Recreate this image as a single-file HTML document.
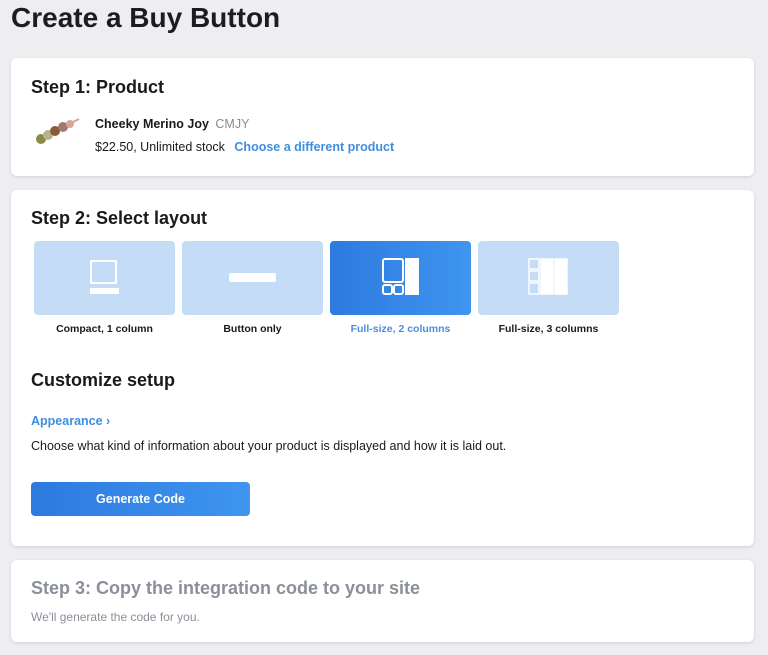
<!DOCTYPE html>
<html><head><style>
body{margin:0;width:768px;height:655px;background:#eeeef1;font-family:"Liberation Sans",sans-serif;color:#1a1a1a;position:relative;overflow:hidden}
.a{position:absolute}
h1{position:absolute;left:11px;top:2px;margin:0;font-size:28px;font-weight:bold;color:#1d1d1f}
.card{position:absolute;left:11px;width:743px;background:#fff;border-radius:6px;box-shadow:0 1px 3px rgba(0,0,0,.12)}
h2{position:absolute;margin:0;font-size:18px;font-weight:bold}
.tile{position:absolute;top:241px;width:141px;height:74px;border-radius:4px;background:#c5dcf7}
.lbl{position:absolute;top:323px;width:141px;text-align:center;font-size:10.5px;font-weight:bold}
</style></head><body>
<h1>Create a Buy Button</h1>
<div class="card" style="top:58px;height:118px"></div>
<h2 style="left:31px;top:77px">Step 1: Product</h2>
<svg class="a" style="left:33px;top:115px" width="48" height="32"><circle cx="8" cy="24" r="5" fill="#8c8a4a"/><circle cx="15" cy="20" r="5" fill="#b9b38a"/><circle cx="22" cy="16" r="5" fill="#8a5a3a"/><circle cx="30" cy="12" r="5" fill="#a07a6e"/><circle cx="37" cy="9" r="4" fill="#d8a498"/><line x1="40" y1="7" x2="46" y2="4" stroke="#d8a498" stroke-width="2"/></svg>
<div class="a" style="left:95px;top:117px;font-size:12.5px;font-weight:bold">Cheeky Merino Joy <span style="font-weight:normal;color:#8a8a94;margin-left:3px">CMJY</span></div>
<div class="a" style="left:95px;top:140px;font-size:12.5px">$22.50, Unlimited stock <span style="color:#3f8ee0;font-weight:bold;margin-left:6px">Choose a different product</span></div>

<div class="card" style="top:190px;height:356px"></div>
<h2 style="left:31px;top:208px">Step 2: Select layout</h2>
<div class="tile" style="left:34px"><div class="a" style="left:56px;top:19px;width:27px;height:24px;border:2px solid #fff;box-sizing:border-box"></div><div class="a" style="left:56px;top:47px;width:29px;height:6px;background:#fff"></div></div>
<div class="tile" style="left:182px"><div class="a" style="left:47px;top:32px;width:47px;height:9px;background:#fff;border-radius:2px"></div></div>
<div class="tile" style="left:330px;background:linear-gradient(90deg,#2d7ae0,#3f95ef)"><svg class="a" style="left:52px;top:17px" width="38" height="38" fill="none" stroke="#fff" stroke-width="2"><rect x="1" y="1" width="20" height="23" rx="2"/><rect x="1" y="27" width="9" height="9" rx="2"/><rect x="12" y="27" width="9" height="9" rx="2"/><rect x="24" y="1" width="12" height="35" fill="#fff"/></svg></div>
<div class="tile" style="left:478px"><svg class="a" style="left:50px;top:17px" width="42" height="38" fill="none" stroke="#fff" stroke-width="1.5"><rect x="1" y="1" width="10" height="10"/><rect x="1" y="13" width="10" height="10"/><rect x="1" y="25" width="10" height="11"/><rect x="13" y="1" width="12" height="35" fill="#fff"/><rect x="27" y="1" width="12" height="35" fill="#fff"/></svg></div>
<div class="lbl" style="left:34px">Compact, 1 column</div>
<div class="lbl" style="left:182px">Button only</div>
<div class="lbl" style="left:330px;color:#4a8fd8">Full-size, 2 columns</div>
<div class="lbl" style="left:478px">Full-size, 3 columns</div>
<h2 style="left:31px;top:370px">Customize setup</h2>
<div class="a" style="left:31px;top:414px;font-size:12.5px;font-weight:bold;color:#3f8ee0">Appearance ›</div>
<div class="a" style="left:31px;top:439px;font-size:12.5px">Choose what kind of information about your product is displayed and how it is laid out.</div>
<div class="a" style="left:31px;top:482px;width:219px;height:34px;border-radius:4px;background:linear-gradient(90deg,#2d7ae0,#3f95ef);color:#fff;font-size:12.5px;font-weight:bold;text-align:center;line-height:34px">Generate Code</div>

<div class="card" style="top:560px;height:82px"></div>
<h2 style="left:31px;top:578px;color:#8a8f99">Step 3: Copy the integration code to your site</h2>
<div class="a" style="left:31px;top:610px;font-size:12px;color:#8a8f99">We'll generate the code for you.</div>
</body></html>
